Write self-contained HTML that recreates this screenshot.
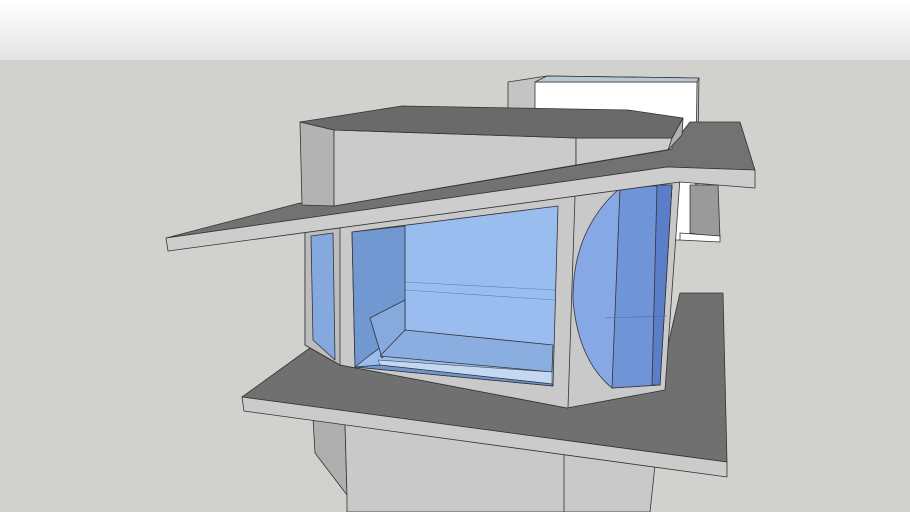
<!DOCTYPE html>
<html><head><meta charset="utf-8"><style>html,body{margin:0;padding:0;width:910px;height:512px;overflow:hidden;background:#d1d1cd}</style></head>
<body>
<svg width="910" height="512" viewBox="0 0 910 512" xmlns="http://www.w3.org/2000/svg" stroke-linejoin="round">
<defs>
<linearGradient id="sky" x1="0" y1="0" x2="0" y2="1"><stop offset="0" stop-color="#ffffff"/><stop offset="1" stop-color="#e3e3e3"/></linearGradient>
</defs>
<rect x="0" y="0" width="910" height="60" fill="url(#sky)"/>
<rect x="0" y="60" width="910" height="452" fill="#d1d1cd"/>
<g stroke="#333" stroke-width="0.8">
<!-- back building -->
<polygon points="508,82 547,76 699,78 697,200 535,200 508,200" fill="#c4c4c4"/>
<polygon points="535,82 697,82 695,240 535,240" fill="#ffffff"/>
<polygon points="547,76 699,78 697,82 535,82" fill="#b9c6d3"/>
<polygon points="690,185 718,185 720,238 690,233" fill="#9a9a9a"/>
<polygon points="680,233 720,236 720,242 680,240" fill="#fff"/>
<!-- lower column -->
<polygon points="313,418 345,423 347,495 315,453" fill="#aeaeae"/>
<polygon points="345,423 565,452 655,465 650,512 347,512 347,495" fill="#c9c9c9"/>
<line x1="564" y1="452" x2="564" y2="512"/>
<!-- floor slab -->
<polygon points="242,397 310,348 340,365 567,408 658,388 680,293 723,293 727,462" fill="#707070"/>
<polygon points="242,397 727,462 727,477 244,411" fill="#cbcbcb"/>
<!-- main body -->
<polygon points="305,232 680,178 665,390 567,408 340,365 305,345" fill="#c9c9c9"/>
<polygon points="305,232 340,228 340,365 305,345" fill="#bdbdbd"/>
<line x1="575" y1="196" x2="568" y2="408"/>
<!-- left narrow window -->
<polygon points="311,236 333,233 335,360 313,340" fill="#85a9de"/>
<!-- big window -->
<polygon points="352,232 558,206 553,386 355,367" fill="#98bdee"/>
<polygon points="352,232 405,226 405,330 370,355 355,367" fill="#7198d0"/>
<polygon points="370,318 405,300 405,330 382,358" fill="#86aadd"/>
<polygon points="380,356 405,330 553,345 552,372" fill="#8aaedf"/>
<polygon points="378,360 552,372 552,384 380,365" fill="#c4d8f2" stroke-width="0.5"/>
<polygon points="355,367 380,365 552,384 553,386" fill="#6e95cf"/>
<line x1="405" y1="282" x2="555" y2="290" stroke="#5d7fb3" stroke-width="0.6"/>
<line x1="405" y1="290" x2="555" y2="300" stroke="#5d7fb3" stroke-width="0.6"/>
<!-- round window -->
<path d="M620,188 Q572,230 573,300 Q578,360 612,388 L658,385 L672,185 Z" fill="#86a8e4"/>
<polygon points="620,188 672,185 660,385 612,388 Q630,330 640,300 Q620,240 620,188" fill="#6f95d8"/>
<polygon points="657,185 672,185 660,385 652,385" fill="#5a7fc8"/>
<line x1="605" y1="318" x2="667" y2="316" stroke="#4a68a0" stroke-width="0.6"/>
<!-- roof slab top (dark) -->
<polygon points="166,238 300,203 334,206 668,150 690,122 740,122 755,170 667,167" fill="#727272"/>
<!-- top box -->
<polygon points="300,122 334,130 334,206 302,205" fill="#b3b3b3"/>
<polygon points="334,130 576,138 576,165 334,206" fill="#cbcbcb"/>
<polygon points="576,138 672,138 672,149 576,165" fill="#cdcdcd"/>
<polygon points="672,138 683,118 682,135 668,150" fill="#b0b0b0"/>
<polygon points="300,122 402,106 628,110 683,118 672,138 576,138 334,130" fill="#6a6a6a"/>
<!-- roof front edge -->
<polygon points="166,238 667,167 755,170 755,188 680,182 168,251" fill="#cdcdcd"/>
</g>
</svg>
</body></html>
